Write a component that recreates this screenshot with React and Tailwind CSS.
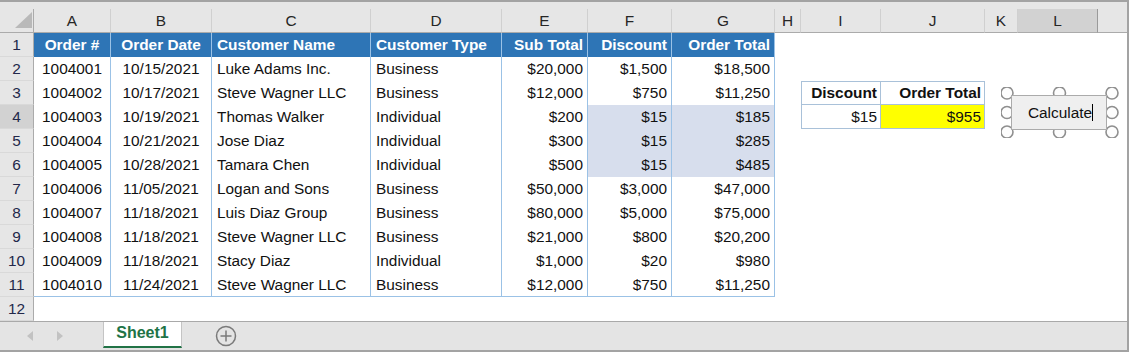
import React from 'react';

const letters = ['A', 'B', 'C', 'D', 'E', 'F', 'G', 'H', 'I', 'J', 'K', 'L'];

const orders = [
  ['Order #', 'Order Date', 'Customer Name', 'Customer Type', 'Sub Total', 'Discount', 'Order Total'],
  ['1004001', '10/15/2021', 'Luke Adams Inc.', 'Business', '$20,000', '$1,500', '$18,500'],
  ['1004002', '10/17/2021', 'Steve Wagner LLC', 'Business', '$12,000', '$750', '$11,250'],
  ['1004003', '10/19/2021', 'Thomas Walker', 'Individual', '$200', '$15', '$185'],
  ['1004004', '10/21/2021', 'Jose Diaz', 'Individual', '$300', '$15', '$285'],
  ['1004005', '10/28/2021', 'Tamara Chen', 'Individual', '$500', '$15', '$485'],
  ['1004006', '11/05/2021', 'Logan and Sons', 'Business', '$50,000', '$3,000', '$47,000'],
  ['1004007', '11/18/2021', 'Luis Diaz Group', 'Business', '$80,000', '$5,000', '$75,000'],
  ['1004008', '11/18/2021', 'Steve Wagner LLC', 'Business', '$21,000', '$800', '$20,200'],
  ['1004009', '11/18/2021', 'Stacy Diaz', 'Individual', '$1,000', '$20', '$980'],
  ['1004010', '11/24/2021', 'Steve Wagner LLC', 'Business', '$12,000', '$750', '$11,250'],
];

const alignFor = (c) => {
  if (c < 2) return 'justify-center';
  if (c < 4) return 'justify-start pl-[5px]';
  return 'justify-end pr-[4px]';
};

const TableCell = ({ row, col, value }) => {
  const header = row === 1;
  const selected = row >= 4 && row <= 6 && col >= 5;
  let cls = 'h-6 flex items-center whitespace-nowrap border-r border-[#9bc2e6] ' + alignFor(col);
  if (header) cls += ' bg-[#2e75b6] text-white font-bold';
  else if (selected) cls += ' bg-[#d7deed] text-[#111]';
  else cls += ' bg-white text-[#111]';
  if (row === 11) cls += ' border-b';
  return <div className={cls}>{value}</div>;
};

const MiniCell = ({ row, col }) => {
  const text = row === 3 ? (col === 0 ? 'Discount' : 'Order Total') : col === 0 ? '$15' : '$955';
  let cls = 'h-6 flex items-center justify-end pr-[3px] border-r border-b border-[#a9c1d9] text-[#111]';
  if (row === 3) cls += ' border-t font-bold';
  if (col === 0) cls += ' border-l';
  cls += row === 4 && col === 1 ? ' bg-[#ffff00]' : ' bg-white';
  return <div className={cls}>{text}</div>;
};

const Blank = () => <div className="h-6" />;

const CalculateButton = () => {
  const handles = [
    [6, 6], [58.5, 6], [111, 6],
    [6, 25.5], [111, 25.5],
    [6, 45], [58.5, 45], [111, 45],
  ];
  return (
    <div className="absolute left-[1001px] top-[78px] w-[118px] h-[51px]">
      <svg className="absolute inset-0" width="118" height="51">
        {handles.map(([x, y], i) => (
          <circle key={i} cx={x} cy={y} r="6" fill="#fdfdfd" stroke="#8f8f8f" strokeWidth="1.6" />
        ))}
      </svg>
      <div className="absolute left-[10px] top-[8px] w-[96px] h-[35px] bg-[#efefef] border border-[#ababab] flex items-center justify-center text-[#111]">
        <span className="ml-[3px]">Calculate</span>
        <span className="w-px h-[17px] bg-black" />
      </div>
    </div>
  );
};

export default function App() {
  const rows = Array.from({ length: 12 }, (_, i) => i + 1);

  return (
    <div className="w-[1129px] h-[352px] overflow-hidden bg-white border-t-2 border-r-2 border-b-2 border-[#a3a3a3] flex flex-col font-['Liberation_Sans',Arial,sans-serif] text-[15.4px] leading-none">
      <div className="h-[7px] bg-[#e6e6e6]" />
      <div className="relative">
        <div className="grid grid-cols-[34px_77px_101px_159px_131px_86px_84px_103px_26px_80px_104px_33px_80px_1fr]">
          <div className="h-6 bg-[#e6e6e6] border-r border-b border-[#ababab] flex items-end justify-end pr-[1px] pb-[4px]">
            <svg width="17" height="16" viewBox="0 0 17 16">
              <polygon points="17,0 17,16 0,16" fill="#b9b9b9" />
            </svg>
          </div>
          {letters.map((l) => (
            <div
              key={l}
              className={
                'h-6 flex items-center justify-center border-b border-[#ababab] text-[#262626] ' +
                (l === 'L' ? 'bg-[#d2d2d2] border-r border-r-[#9a9a9a]' : 'bg-[#e6e6e6] border-r border-r-[#d0d0d0]')
              }
            >
              {l}
            </div>
          ))}
          <div className="h-6 bg-[#e6e6e6] border-b border-[#ababab]" />

          {rows.map((r) => (
            <React.Fragment key={r}>
              <div
                className={
                  'h-6 flex items-center justify-center border-r border-r-[#ababab] border-b border-b-[#d9d9d9] text-[#23284a] ' +
                  (r === 4 ? 'bg-[#d2d2d2]' : 'bg-[#e6e6e6]')
                }
              >
                {r}
              </div>
              {orders[r - 1]
                ? orders[r - 1].map((v, c) => <TableCell key={c} row={r} col={c} value={v} />)
                : Array.from({ length: 7 }, (_, c) => <Blank key={c} />)}
              <Blank />
              {r === 3 || r === 4 ? (
                <>
                  <MiniCell row={r} col={0} />
                  <MiniCell row={r} col={1} />
                </>
              ) : (
                <>
                  <Blank />
                  <Blank />
                </>
              )}
              <Blank />
              <Blank />
              <Blank />
            </React.Fragment>
          ))}
        </div>
        <CalculateButton />
      </div>

      <div className="flex-1 bg-[#e4e4e4] border-t border-[#a9a9a9] flex items-stretch">
        <div className="w-[103px] flex items-center">
          <svg width="6" height="10" viewBox="0 0 6 10" className="ml-[27px]">
            <polygon points="6,0 6,10 0,5" fill="#c2c2c2" />
          </svg>
          <svg width="6" height="10" viewBox="0 0 6 10" className="ml-[24px]">
            <polygon points="0,0 0,10 6,5" fill="#c2c2c2" />
          </svg>
        </div>
        <div className="w-[79px] mb-[2px] bg-white border-x border-[#c4c4c4] border-b-2 border-b-[#217346] flex items-center justify-center pb-[2px] font-bold text-[16px] text-[#217346]">
          Sheet1
        </div>
        <div className="flex items-center ml-[33px] pb-[1px]">
          <svg width="22" height="22" viewBox="0 0 22 22">
            <circle cx="11" cy="11" r="9.5" fill="none" stroke="#7a7a7a" strokeWidth="1.5" />
            <line x1="11" y1="5.5" x2="11" y2="16.5" stroke="#7a7a7a" strokeWidth="1.5" />
            <line x1="5.5" y1="11" x2="16.5" y2="11" stroke="#7a7a7a" strokeWidth="1.5" />
          </svg>
        </div>
      </div>
    </div>
  );
}
